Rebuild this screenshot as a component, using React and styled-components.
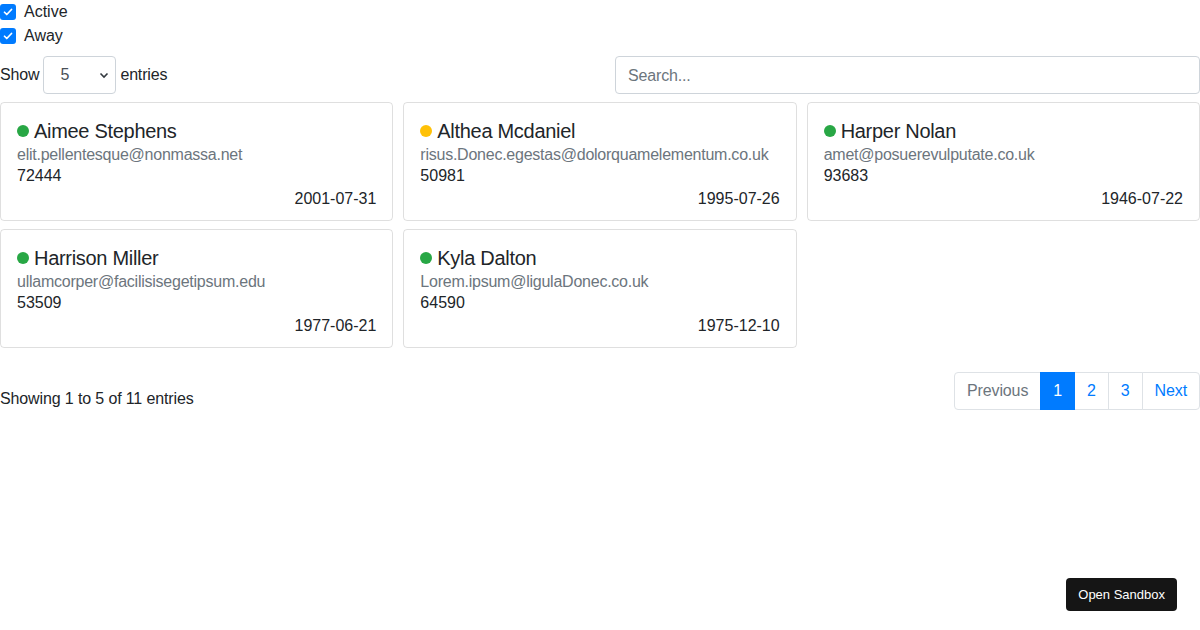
import React from 'react';
import styled, { createGlobalStyle } from 'styled-components';

const GlobalStyle = createGlobalStyle`
  body {
    margin: 0;
    font-family: "Liberation Sans", Arial, sans-serif;
    font-size: 16px;
    line-height: 1.5;
    color: #212529;
    background: #fff;
  }
  * { box-sizing: border-box; }
`;

const Page = styled.div`
  width: 1200px;
`;

const Filters = styled.div`
  display: flex;
  flex-direction: column;
`;

const CheckRow = styled.label`
  display: flex;
  align-items: center;
  height: 24px;
  gap: 8px;
`;

const Box = styled.span`
  width: 16px;
  height: 16px;
  border-radius: 3px;
  background: #007bff;
  display: flex;
  align-items: center;
  justify-content: center;
`;

const Toolbar = styled.div`
  display: flex;
  justify-content: space-between;
  align-items: center;
  margin-top: 8px;
`;

const Length = styled.div`
  display: flex;
  align-items: center;
  gap: 4px;
  letter-spacing: -0.01em;
`;

const SelectBox = styled.div`
  width: 73px;
  height: 38px;
  border: 1px solid #ced4da;
  border-radius: 4px;
  display: flex;
  align-items: center;
  justify-content: space-between;
  padding: 0 6px 0 16px;
  color: #495057;
`;

const Search = styled.input`
  width: 585px;
  height: 38px;
  border: 1px solid #ced4da;
  border-radius: 4px;
  padding: 7px 12px 5px;
  font-family: inherit;
  font-size: 16px;
  letter-spacing: -0.01em;
  color: #495057;
  &::placeholder { color: #6c757d; }
`;

const Grid = styled.div`
  display: grid;
  grid-template-columns: repeat(3, 1fr);
  column-gap: 10px;
  row-gap: 8px;
  margin-top: 8px;
`;

const Card = styled.div`
  border: 1px solid rgba(0, 0, 0, 0.125);
  border-radius: 4px;
  padding: 16px 16px 9px;
  height: 119px;
`;

const Name = styled.div`
  display: flex;
  align-items: center;
  font-size: 20px;
  line-height: 24px;
  letter-spacing: -0.015em;
`;

const Dot = styled.span`
  width: 12px;
  height: 12px;
  border-radius: 50%;
  background: ${(p) => (p.away ? '#ffc107' : '#28a745')};
  margin-right: 5px;
`;

const Email = styled.div`
  color: #6c757d;
  line-height: 22px;
  padding-top: 1px;
  letter-spacing: -0.015em;
`;

const Zip = styled.div`
  line-height: 22px;
  margin-top: -1px;
`;

const DateLine = styled.div`
  text-align: right;
  line-height: 24px;
`;

const Footer = styled.div`
  display: flex;
  justify-content: space-between;
  align-items: flex-start;
  margin-top: 24px;
`;

const Info = styled.div`
  padding-top: 15px;
  letter-spacing: -0.008em;
`;

const Pager = styled.ul`
  display: flex;
  list-style: none;
  margin: 0;
  padding: 0;
  letter-spacing: -0.008em;
`;

const PageItem = styled.li`
  padding: 7px 12px;
  line-height: 22px;
  border: 1px solid #dee2e6;
  margin-left: -1px;
  color: ${(p) => (p.active ? '#fff' : p.disabled ? '#6c757d' : '#007bff')};
  background: ${(p) => (p.active ? '#007bff' : '#fff')};
  border-color: ${(p) => (p.active ? '#007bff' : '#dee2e6')};
  position: relative;
  z-index: ${(p) => (p.active ? 1 : 0)};
  &:first-child { border-radius: 4px 0 0 4px; margin-left: 0; }
  &:last-child { border-radius: 0 4px 4px 0; }
`;

const SandboxButton = styled.div`
  position: fixed;
  right: 23px;
  bottom: 19px;
  background: #151515;
  color: #fff;
  font-size: 13px;
  line-height: 33px;
  padding: 0 12px;
  border-radius: 4px;
  font-family: "Liberation Sans", Arial, sans-serif;
`;

const people = [
  { name: 'Aimee Stephens', email: 'elit.pellentesque@nonmassa.net', zip: '72444', date: '2001-07-31' },
  { name: 'Althea Mcdaniel', email: 'risus.Donec.egestas@dolorquamelementum.co.uk', zip: '50981', date: '1995-07-26', away: true },
  { name: 'Harper Nolan', email: 'amet@posuerevulputate.co.uk', zip: '93683', date: '1946-07-22' },
  { name: 'Harrison Miller', email: 'ullamcorper@facilisisegetipsum.edu', zip: '53509', date: '1977-06-21' },
  { name: 'Kyla Dalton', email: 'Lorem.ipsum@ligulaDonec.co.uk', zip: '64590', date: '1975-12-10' },
];

const Check = ({ label }) => (
  <CheckRow>
    <Box>
      <svg width="10" height="10" viewBox="0 0 8 8">
        <path d="M1.2 4.2 L3 6 L6.8 2" fill="none" stroke="#fff" strokeWidth="1.4" strokeLinecap="round" strokeLinejoin="round" />
      </svg>
    </Box>
    {label}
  </CheckRow>
);

const App = () => (
  <Page>
    <GlobalStyle />
    <Filters>
      <Check label="Active" />
      <Check label="Away" />
    </Filters>
    <Toolbar>
      <Length>
        Show
        <SelectBox>
          5
          <svg width="10" height="8" viewBox="0 0 10 8">
            <path d="M1.5 2.5 L5 6 L8.5 2.5" fill="none" stroke="#343a40" strokeWidth="1.6" />
          </svg>
        </SelectBox>
        entries
      </Length>
      <Search placeholder="Search..." />
    </Toolbar>
    <Grid>
      {people.map((p) => (
        <Card key={p.name}>
          <Name>
            <Dot away={p.away} />
            {p.name}
          </Name>
          <Email>{p.email}</Email>
          <Zip>{p.zip}</Zip>
          <DateLine>{p.date}</DateLine>
        </Card>
      ))}
    </Grid>
    <Footer>
      <Info>Showing 1 to 5 of 11 entries</Info>
      <Pager>
        <PageItem disabled>Previous</PageItem>
        <PageItem active>1</PageItem>
        <PageItem>2</PageItem>
        <PageItem>3</PageItem>
        <PageItem>Next</PageItem>
      </Pager>
    </Footer>
    <SandboxButton>Open Sandbox</SandboxButton>
  </Page>
);

export default App;
